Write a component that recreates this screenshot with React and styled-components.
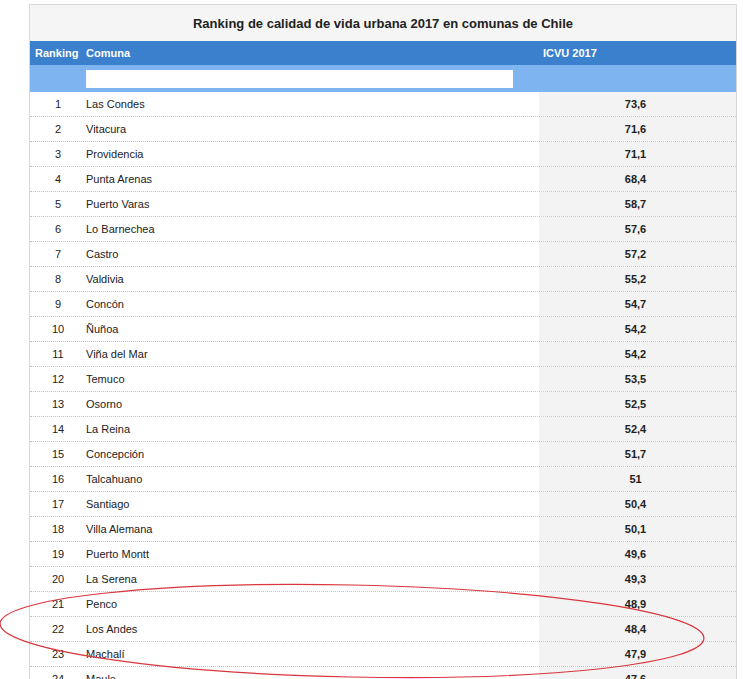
import styled, { createGlobalStyle } from 'styled-components';

const Global = createGlobalStyle`
  body { margin: 0; background: #fff; font-family: "Liberation Sans", Arial, sans-serif; overflow: hidden; }
`;

const rows = [
  ['Las Condes', '73,6'], ['Vitacura', '71,6'], ['Providencia', '71,1'], ['Punta Arenas', '68,4'],
  ['Puerto Varas', '58,7'], ['Lo Barnechea', '57,6'], ['Castro', '57,2'], ['Valdivia', '55,2'],
  ['Concón', '54,7'], ['Ñuñoa', '54,2'], ['Viña del Mar', '54,2'], ['Temuco', '53,5'],
  ['Osorno', '52,5'], ['La Reina', '52,4'], ['Concepción', '51,7'], ['Talcahuano', '51'],
  ['Santiago', '50,4'], ['Villa Alemana', '50,1'], ['Puerto Montt', '49,6'], ['La Serena', '49,3'],
  ['Penco', '48,9'], ['Los Andes', '48,4'], ['Machalí', '47,9'], ['Maule', '47,6'],
];

const Page = styled.div`
  position: relative;
  height: 679px;
  padding: 4px 6px 0 29px;
  box-sizing: border-box;
`;
const Panel = styled.div`
  border: 1px solid #d8d8d8;
  border-bottom: none;
  height: 100%;
  overflow: hidden;
`;
const Title = styled.div`
  height: 36px;
  background: #f5f5f5;
  display: flex;
  align-items: center;
  justify-content: center;
  font-size: 13px;
  font-weight: bold;
  color: #222;
`;
const Row = styled.div`
  display: grid;
  grid-template-columns: 56px 453px 1fr;
  height: ${p => p.$h}px;
  align-items: stretch;
  background: ${p => p.$bg || 'transparent'};
  color: ${p => p.$color || '#222'};
  font-size: 11px;
  border-bottom: ${p => (p.$line ? '1px dotted #c4c4c4' : 'none')};
  box-sizing: border-box;
`;
const Cell = styled.div`
  display: flex;
  align-items: center;
  justify-content: ${p => p.$align || 'flex-start'};
  padding-left: ${p => p.$pl || 0}px;
  padding-right: ${p => p.$pr || 0}px;
  background: ${p => p.$bg || 'transparent'};
  font-weight: ${p => (p.$bold ? 'bold' : 'normal')};
`;
const Search = styled.div`
  background: #fff;
  height: 18px;
  width: 427px;
`;
const Ellipse = styled.svg`
  position: absolute;
  left: 0;
  top: 580px;
`;

export default function App() {
  return (
    <Page>
      <Global />
      <Panel>
        <Title>Ranking de calidad de vida urbana 2017 en comunas de Chile</Title>
        <Row $h={24} $bg="#3b80cc" $color="#fff">
          <Cell $pl={5} $bold>Ranking</Cell>
          <Cell $bold>Comuna</Cell>
          <Cell $pl={4} $bold>ICVU 2017</Cell>
        </Row>
        <Row $h={27} $bg="#7eb4ef">
          <Cell />
          <Cell><Search /></Cell>
          <Cell />
        </Row>
        {rows.map(([name, v], i) => (
          <Row key={name} $h={25} $line>
            <Cell $align="center">{i + 1}</Cell>
            <Cell>{name}</Cell>
            <Cell $align="center" $bg="#f3f3f3" $bold $pr={4}>{v}</Cell>
          </Row>
        ))}
      </Panel>
      <Ellipse width="743" height="99" viewBox="0 580 743 99">
        <ellipse cx="352" cy="631" rx="352" ry="46" fill="none" stroke="#d9363e" strokeWidth="1.2" transform="rotate(1.2 352 631)" />
      </Ellipse>
    </Page>
  );
}
